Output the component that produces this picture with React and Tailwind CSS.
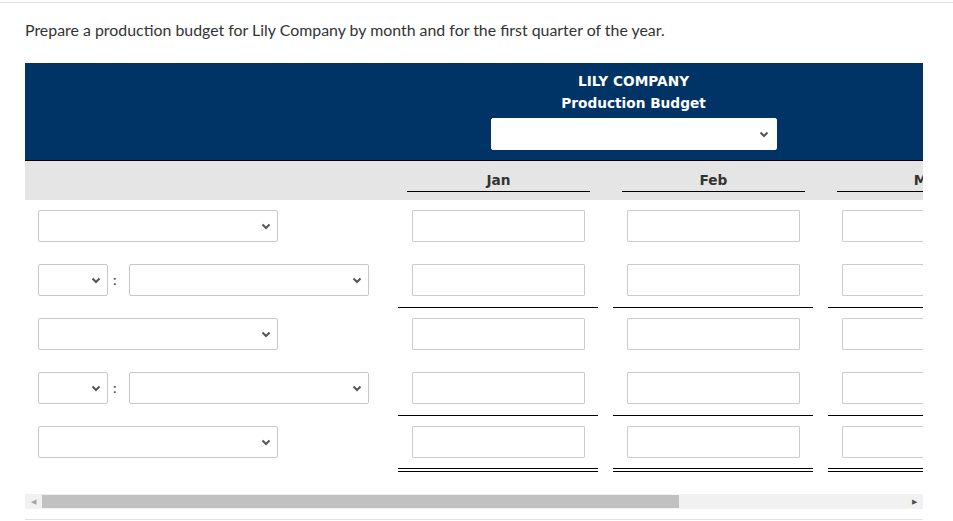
import React from 'react';

const months = [
    { key: 'jan', label: 'Jan', width: 'w-[215px]' },
    { key: 'feb', label: 'Feb', width: 'w-[215px]' },
    { key: 'mar', label: 'Mar', width: 'w-[215px]' },
    { key: 'qtr', label: 'Quarter', width: 'w-[199px]' },
];

// line under the month cells of each row
const rows = [
    { id: 1, kind: 'single', line: '' },
    { id: 2, kind: 'pair', line: 'border-b border-black' },
    { id: 3, kind: 'single', line: '' },
    { id: 4, kind: 'pair', line: 'border-b border-black' },
    { id: 5, kind: 'single', line: 'border-b-4 border-double border-black', tall: true },
];

function Chevron() {
    return (
        <svg width="10" height="7" viewBox="0 0 10 7" className="shrink-0">
            <path d="M1.5 1.5 L5 5 L8.5 1.5" fill="none" stroke="#555" strokeWidth="2" />
        </svg>
    );
}

function Select({ className }) {
    return (
        <div className={`h-[32px] bg-white border border-[#c8c8c8] rounded-[2px] flex items-center justify-end pr-[6px] ${className}`}>
            <Chevron />
        </div>
    );
}

function AmountInput() {
    return <div className="w-[173px] h-[32px] bg-white border border-[#cccccc] rounded-[1px]" />;
}

export default function App() {
    return (
        <div className="w-[953px] h-[521px] bg-white overflow-hidden font-['Lato',sans-serif]">
            <div className="mt-[2px] border-t border-[#e2e2e2]" />
            <div className="pl-[25px] pr-[30px]">
                <p className="pt-[17px] text-[15.9px] leading-[20px] text-[#333]">
                    Prepare a production budget for Lily Company by month and for the first quarter of the year.
                </p>

                {/* Budget table, wider than its frame */}
                <div className="mt-[23px] overflow-hidden">
                    <div className="w-[1217px]">
                        <div className="bg-[#003366] border-b border-black pt-[7px] pb-[10px] flex flex-col items-center text-white font-['DejaVu_Sans',sans-serif] font-bold text-[13.7px] leading-[22px]">
                            <div>LILY COMPANY</div>
                            <div>Production Budget</div>
                            <Select className="mt-[4px] w-[286px] h-[31px] border-white pr-[7px]" />
                        </div>

                        <div className="h-[39px] bg-[#e5e5e5] flex items-end pb-[8px]">
                            <div className="w-[373px]" />
                            {months.map(m => (
                                <div key={m.key} className={`${m.width} pl-[9px]`}>
                                    <div className="w-[183px] border-b border-black pb-[2px] text-center font-['DejaVu_Sans',sans-serif] font-bold text-[13.7px] leading-[17px] text-[#333]">
                                        {m.label}
                                    </div>
                                </div>
                            ))}
                        </div>

                        {rows.map(row => (
                            <div key={row.id} className={`flex ${row.tall ? 'h-[56px]' : 'h-[54px]'}`}>
                                <div className="w-[373px] pl-[13px] pt-[10px]">
                                    {row.kind === 'single' ? (
                                        <Select className="w-[240px]" />
                                    ) : (
                                        <div className="flex items-center">
                                            <Select className="w-[70px]" />
                                            <span className="w-[21px] pl-[5px] text-[14px] text-[#333] leading-[32px]">:</span>
                                            <Select className="w-[240px]" />
                                        </div>
                                    )}
                                </div>
                                {months.map(m => (
                                    <div key={m.key} className={`${m.width} pr-[15px]`}>
                                        <div className={`w-[200px] h-full pt-[10px] pl-[14px] ${row.line}`}>
                                            <AmountInput />
                                        </div>
                                    </div>
                                ))}
                            </div>
                        ))}
                    </div>
                </div>

                {/* Horizontal scrollbar */}
                <div className="mt-[22px] h-[15px] bg-[#f1f1f1] flex items-stretch">
                    <div className="w-[17px] flex items-center justify-center text-[#a3a3a3] text-[7px]">◀</div>
                    <div className="w-[637px] bg-[#c1c1c1] my-[1px]" />
                    <div className="flex-1" />
                    <div className="w-[17px] flex items-center justify-center text-[#505050] text-[7px]">▶</div>
                </div>
                <div className="mt-[10px] border-t border-[#e2e2e2]" />
            </div>
        </div>
    );
}
